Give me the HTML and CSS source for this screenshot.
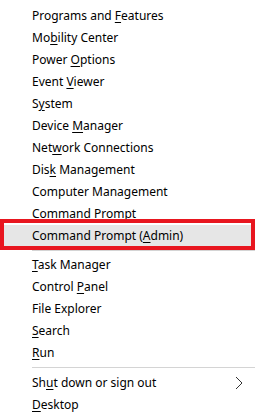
FILE: index.html
```html
<!DOCTYPE html>
<html>
<head>
<meta charset="utf-8">
<link rel="stylesheet" href="styles.css">
</head>
<body>
<div class="menu">
  <div class="item">Programs and <u>F</u>eatures</div>
  <div class="item">Mo<u>b</u>ility Center</div>
  <div class="item">Power <u>O</u>ptions</div>
  <div class="item">Event <u>V</u>iewer</div>
  <div class="item">S<u>y</u>stem</div>
  <div class="item">Device <u>M</u>anager</div>
  <div class="item">Net<u>w</u>ork Connections</div>
  <div class="item">Dis<u>k</u> Management</div>
  <div class="item">Computer Management</div>
  <div class="item"><u>C</u>ommand Prompt</div>
  <div class="item selected">Command Prompt (<u>A</u>dmin)<span class="mark"></span></div>
  <div class="sep first"></div>
  <div class="item"><u>T</u>ask Manager</div>
  <div class="item">Control <u>P</u>anel</div>
  <div class="item">File Explorer</div>
  <div class="item"><u>S</u>earch</div>
  <div class="item"><u>R</u>un</div>
  <div class="sep second"></div>
  <div class="item sub">Sh<u>u</u>t down or sign out
    <svg class="chev" width="8" height="14" viewBox="0 0 8 14"><polyline points="1,1 7,7 1,13" fill="none" stroke="#333" stroke-width="1"/></svg>
  </div>
  <div class="item"><u>D</u>esktop</div>
</div>
</body>
</html>
```
FILE: styles.css
```css
html, body {
  margin: 0;
  padding: 0;
  background: #ffffff;
}
.menu {
  width: 255px;
  padding-top: 5px;
  font-family: "Noto Sans", "Open Sans", sans-serif;
  font-size: 12px;
  color: #000;
}
.item {
  position: relative;
  height: 22px;
  line-height: 22px;
  padding-left: 32px;
  white-space: nowrap;
}
.item u {
  text-decoration-thickness: 1px;
  text-underline-offset: 2px;
}
.selected {
  background: #e6e6e6;
}
.mark {
  position: absolute;
  left: 0;
  right: 0;
  top: -6px;
  bottom: -3px;
  border: 4px solid #e8161f;
}
.sep {
  margin-left: 32px;
  height: 1px;
  background: #d4d4d4;
}
.sep.first {
  margin-top: 3px;
  margin-bottom: 3px;
}
.sep.second {
  margin-top: 3px;
  margin-bottom: 4px;
}
.chev {
  position: absolute;
  right: 12px;
  top: 4px;
}
```
